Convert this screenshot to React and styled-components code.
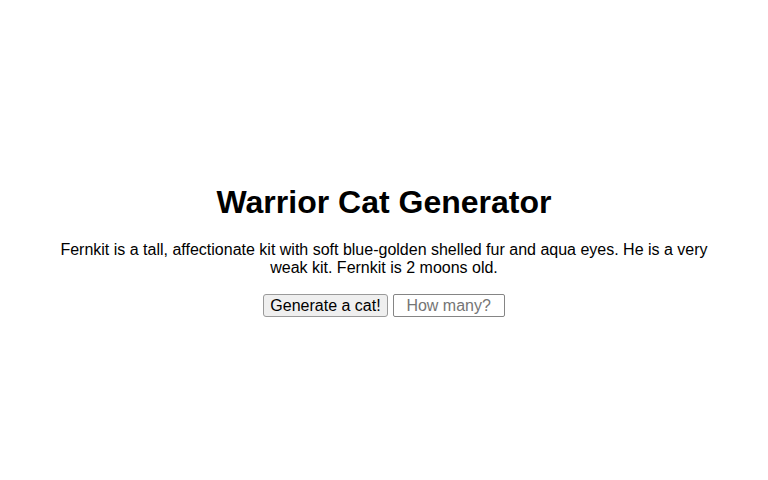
import React, { useState } from 'react';
import styled, { createGlobalStyle } from 'styled-components';

const GlobalStyle = createGlobalStyle`
  body {
    margin: 0;
    font-family: "Liberation Sans", Arial, sans-serif;
    background: #fff;
    color: #000;
  }
`;

const Page = styled.div`
  display: flex;
  flex-direction: column;
  justify-content: center;
  align-items: center;
  min-height: 100vh;
  text-align: center;
`;

const Title = styled.h1`
  font-size: 32px;
  font-weight: bold;
  margin: 21px 0 20px;
  line-height: 37px;
`;

const Description = styled.p`
  font-size: 16px;
  line-height: 18px;
  max-width: 660px;
  margin: 0 0 17px;
`;

const Controls = styled.div`
  display: flex;
  gap: 5px;
  align-items: center;
`;

const Button = styled.button`
  font-family: "Liberation Sans", Arial, sans-serif;
  font-size: 16px;
  height: 23px;
  padding: 0 6px;
  background: #efefef;
  color: #000;
  border: 1px solid #9a9a9a;
  border-radius: 3px;
  cursor: pointer;
`;

const Input = styled.input`
  font-family: "Liberation Sans", Arial, sans-serif;
  font-size: 16px;
  width: 112px;
  height: 23px;
  box-sizing: border-box;
  padding: 0 2px;
  text-align: center;
  border: 1px solid #858585;
  border-radius: 2px;
  background: #fff;
  &::placeholder {
    color: #757575;
  }
`;

const App = () => {
  const [count, setCount] = useState('');

  return (
    <>
      <GlobalStyle />
      <Page>
        <Title>Warrior Cat Generator</Title>
        <Description>
          Fernkit is a tall, affectionate kit with soft blue-golden shelled fur and aqua eyes. He is a very weak kit. Fernkit is 2 moons old.
        </Description>
        <Controls>
          <Button>Generate a cat!</Button>
          <Input
            type="text"
            placeholder="How many?"
            value={count}
            onChange={(e) => setCount(e.target.value)}
          />
        </Controls>
      </Page>
    </>
  );
};

export default App;
